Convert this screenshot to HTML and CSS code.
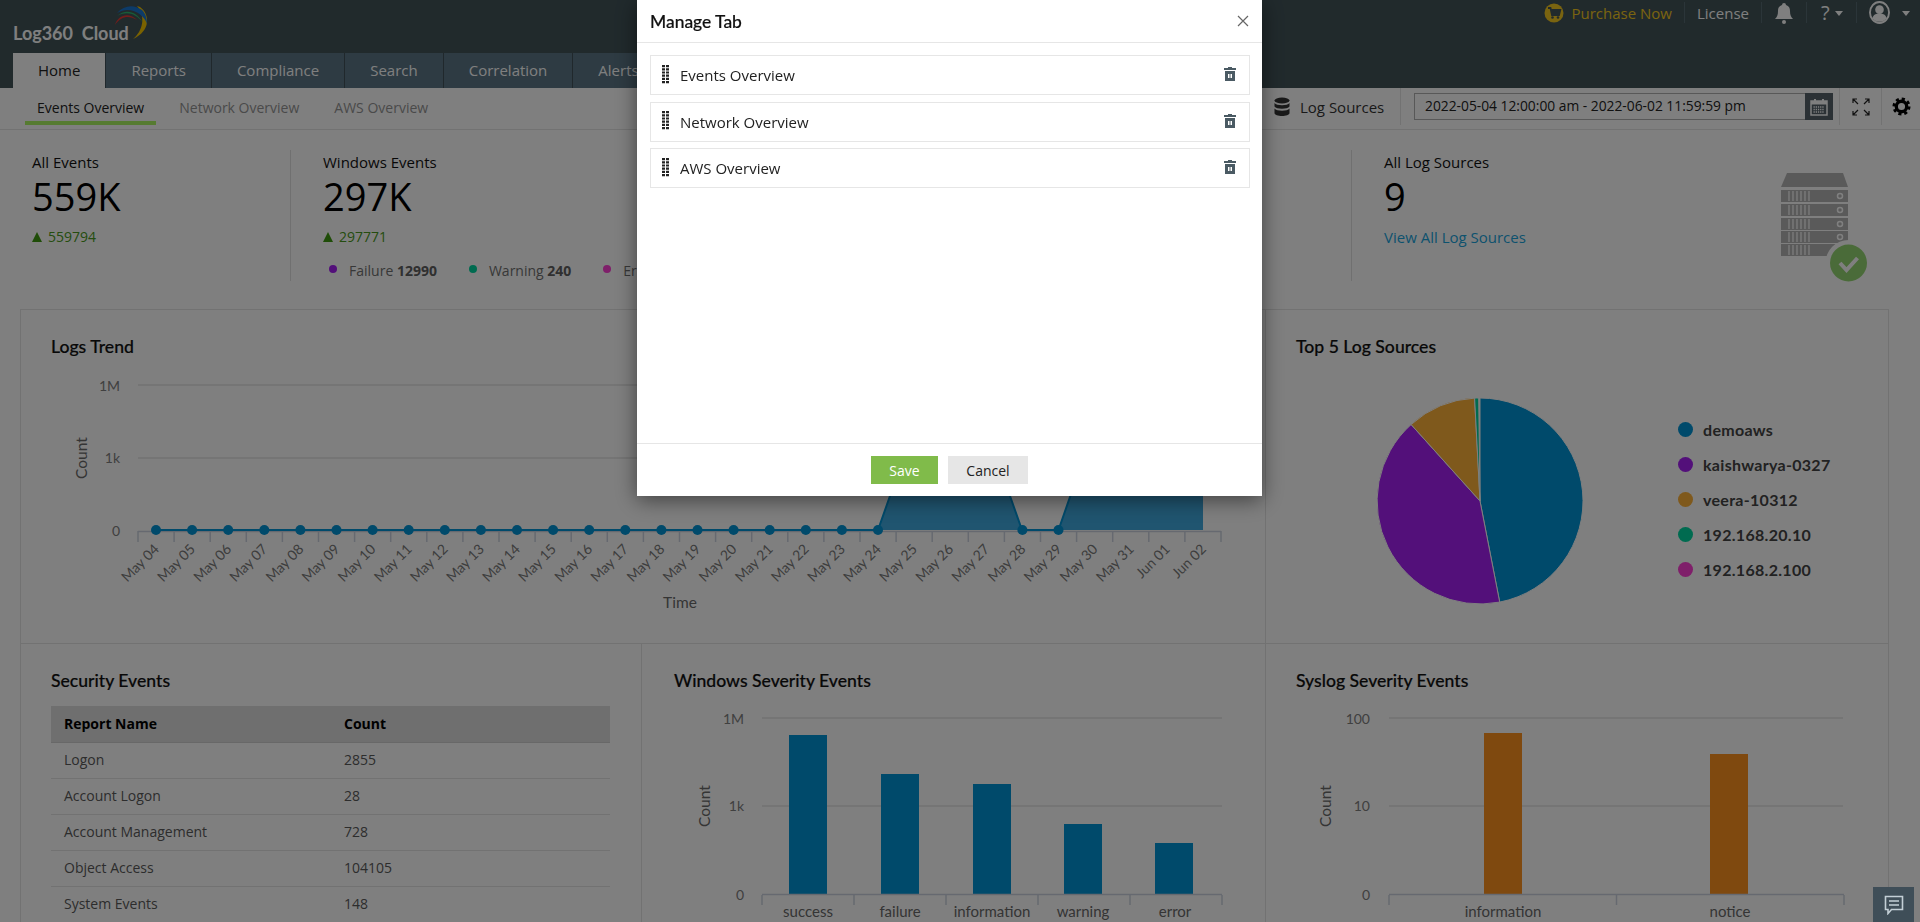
FILE: index.html
```html
<!DOCTYPE html>
<html lang="en">
<head>
  <meta charset="UTF-8">
  <meta name="viewport" content="width=device-width, initial-scale=1.0">
  <title>Log360 Cloud</title>
  <link rel="stylesheet" href="styles.css">
</head>
<body>
  <header class="header">
    <div class="top_bar">
      <div class="logo">
        <span class="logo_text">Log360&nbsp; Cloud</span>
        <svg class="logo_arcs" viewBox="110 0 45 45">
          <path d="M140 7C150 14 151 31 133 39C143 31 146 16 137 6Z" fill="#f4c400"/>
          <path d="M117 13C124 5 134 4 142 10C146 14 147 19 147 24C144 14 130 5 117 13Z" fill="#1976d2"/>
          <path d="M117 16C125 9 136 10 143 23C136 13 126 11 117 16Z" fill="#2eb872"/>
          <path d="M115 25C118 14 130 12 137 20C129 15 121 16 115 25Z" fill="#e53935"/>
        </svg>
      </div>
      <div class="utils">
        <a class="util purchase">
          <svg class="cart" viewBox="0 0 20 20">
            <circle cx="10" cy="10" r="9.5" fill="#f4c820"/>
            <path d="M4 5h2.5l1.5 7h7l1.300-5H7" fill="none" stroke="#425459" stroke-width="1.800"/>
            <rect x="7.500" y="7" width="8" height="4" fill="#425459"/>
            <circle cx="8.500" cy="14.500" r="1.300" fill="#425459"/>
            <circle cx="14" cy="14.500" r="1.300" fill="#425459"/>
          </svg>
          Purchase Now
        </a>
        <a class="util">License</a>
        <a class="util">
          <svg class="bell" viewBox="0 0 20 22">
            <path d="M10 1a2 2 0 0 1 2 2c3 1 4 3 4 6 0 4 1 6 3 8H1c2-2 3-4 3-8 0-3 1-5 4-6a2 2 0 0 1 2-2Z" fill="#fff"/>
            <circle cx="10" cy="20" r="2" fill="#fff"/>
          </svg>
        </a>
        <a class="util help">?<i class="caret"></i></a>
        <a class="util last">
          <svg class="user" viewBox="0 0 22 24">
            <ellipse cx="11" cy="12" rx="10" ry="11" fill="none" stroke="#fff" stroke-width="2"/>
            <circle cx="11" cy="9" r="4.500" fill="#fff"/>
            <path d="M3.500 18c1-4 4-5 7.500-5s6.500 1 7.500 5c-4 5-11 5-15 0Z" fill="#fff"/>
          </svg>
          <i class="caret"></i>
        </a>
      </div>
    </div>
    <nav class="tabs">
      <a class="tab active">Home</a>
      <a class="tab">Reports</a>
      <a class="tab">Compliance</a>
      <a class="tab">Search</a>
      <a class="tab">Correlation</a>
      <a class="tab">Alerts</a>
    </nav>
  </header>

  <div class="sub_nav">
    <div class="sub_tabs">
      <a class="sub_tab active">Events Overview</a>
      <a class="sub_tab">Network Overview</a>
      <a class="sub_tab">AWS Overview</a>
    </div>
    <div class="tools">
      <div class="tool log_src">
        <svg class="db" viewBox="0 0 16 20">
          <ellipse cx="8" cy="3.500" rx="7.500" ry="3" fill="#333"/>
          <path d="M.5 6c2 3 13 3 15 0v3.500c-2 3-13 3-15 0ZM.5 11.500c2 3 13 3 15 0V16c0 4-15 4-15 0Z" fill="#333"/>
        </svg>
        <span>Log Sources</span>
      </div>
      <div class="tool date_tool">
        <div class="date_inp">2022-05-04 12:00:00 am - 2022-06-02 11:59:59 pm</div>
        <div class="cal_btn">
          <svg class="cal" viewBox="0 0 18 18">
            <rect x="1" y="3" width="16" height="14" fill="none" stroke="#fff" stroke-width="1.500"/>
            <rect x="1" y="3" width="16" height="3.500" fill="#fff"/>
            <path d="M5 1v4M13 1v4" stroke="#fff" stroke-width="2"/>
            <path d="M3.500 9h11M3.500 11.500h11M3.500 14h11" stroke="#fff" stroke-width="1.300" stroke-dasharray="1.300 .9"/>
          </svg>
        </div>
      </div>
      <div class="tool expand">
        <svg class="expand_ico" viewBox="0 0 20 20">
          <path d="M2 6V2h4M2 2l5 5M14 2h4v4M18 2l-5 5M2 14v4h4M2 18l5-5M18 14v4h-4M18 18l-5-5" fill="none" stroke="#222" stroke-width="1.200"/>
        </svg>
      </div>
      <div class="tool gear">
        <svg class="gear_ico" viewBox="0 0 20 20">
          <circle cx="10" cy="10" r="5.500" fill="none" stroke="#000" stroke-width="3.500"/>
          <circle cx="10" cy="10" r="8" fill="none" stroke="#000" stroke-width="3" stroke-dasharray="3.280 3"/>
        </svg>
      </div>
    </div>
  </div>

  <section class="stats">
    <div class="stat first">
      <div class="stat_label">All Events</div>
      <div class="stat_num">559K</div>
      <div class="stat_delta"><i class="up"></i>559794</div>
    </div>
    <div class="stat wide">
      <div class="stat_label">Windows Events</div>
      <div class="stat_num">297K</div>
      <div class="stat_delta"><i class="up"></i>297771</div>
      <div class="stat_legend">
        <span><i class="dot purple"></i>Failure <b>12990</b></span>
        <span><i class="dot green"></i>Warning <b>240</b></span>
        <span><i class="dot pink"></i>Error <b>112</b></span>
      </div>
    </div>
    <div class="stat last_stat">
      <div>
        <div class="stat_label">All Log Sources</div>
        <div class="stat_num">9</div>
        <a class="stat_link">View All Log Sources</a>
      </div>
      <svg class="server" viewBox="1775 170 95 112">
        <polygon points="1787,172 1843,172 1848,186 1781,186" fill="#b5b5b5"/>
        <g fill="#b5b5b5">
          <rect x="1781" y="189" width="67" height="12"/>
          <rect x="1781" y="203" width="67" height="12"/>
          <rect x="1781" y="217" width="67" height="12"/>
          <rect x="1781" y="230" width="67" height="12"/>
          <rect x="1781" y="243" width="67" height="12"/>
        </g>
        <path d="M1789 190v10M1793 190v10M1797 190v10M1801 190v10M1805 190v10M1809 190v10M1789 204v10M1793 204v10M1797 204v10M1801 204v10M1805 204v10M1809 204v10M1789 218v10M1793 218v10M1797 218v10M1801 218v10M1805 218v10M1809 218v10M1789 231v10M1793 231v10M1797 231v10M1801 231v10M1805 231v10M1809 231v10M1789 244v10M1793 244v10M1797 244v10M1801 244v10M1805 244v10M1809 244v10" stroke="#fff" stroke-width="1.200"/>
        <g fill="#b5b5b5" stroke="#fff" stroke-width="1.500">
          <circle cx="1840" cy="195" r="2.500"/>
          <circle cx="1840" cy="209" r="2.500"/>
          <circle cx="1840" cy="223" r="2.500"/>
          <circle cx="1840" cy="236" r="2.500"/>
        </g>
        <circle cx="1848.500" cy="262" r="23" fill="#fff"/>
        <circle cx="1848.500" cy="262" r="18.500" fill="#95d673"/>
        <path d="M1840 262l6.500 7 11-12" fill="none" stroke="#fff" stroke-width="4"/>
      </svg>
    </div>
  </section>

  <section class="cards">
    <div class="card trend">
      <h3>Logs Trend</h3>
      <svg class="trend_chart" viewBox="51 360 1200 270">
        <path d="M138 385H1221M138 458H1221" stroke="#e4e4e4" stroke-width="1.500"/>
        <path d="M878 530L914 428L986 428L1022 530ZM1058.500 530L1094 428L1203 428L1203 530Z" fill="#40aae0"/>
        <path d="M138 531.500H1221M138 531V542M174.100 531V542M210.200 531V542M246.300 531V542M282.400 531V542M318.500 531V542M354.600 531V542M390.700 531V542M426.800 531V542M462.900 531V542M499 531V542M535.100 531V542M571.200 531V542M607.300 531V542M643.400 531V542M679.500 531V542M715.600 531V542M751.700 531V542M787.800 531V542M823.900 531V542M860 531V542M896.100 531V542M932.200 531V542M968.300 531V542M1004.400 531V542M1040.500 531V542M1076.600 531V542M1112.700 531V542M1148.800 531V542M1184.900 531V542M1221 531V542" stroke="#ccd3e0" stroke-width="1.500" fill="none"/>
        <path d="M156 530H878L914 428L986 428L1022 530H1058.500L1094 428" fill="none" stroke="#0094d6" stroke-width="2"/>
        <g fill="#0094d6">
          <circle cx="156" cy="530" r="5"/><circle cx="192.100" cy="530" r="5"/><circle cx="228.200" cy="530" r="5"/><circle cx="264.300" cy="530" r="5"/><circle cx="300.400" cy="530" r="5"/><circle cx="336.500" cy="530" r="5"/><circle cx="372.600" cy="530" r="5"/><circle cx="408.700" cy="530" r="5"/><circle cx="444.800" cy="530" r="5"/><circle cx="480.900" cy="530" r="5"/><circle cx="517" cy="530" r="5"/><circle cx="553.100" cy="530" r="5"/><circle cx="589.200" cy="530" r="5"/><circle cx="625.300" cy="530" r="5"/><circle cx="661.400" cy="530" r="5"/><circle cx="697.500" cy="530" r="5"/><circle cx="733.600" cy="530" r="5"/><circle cx="769.700" cy="530" r="5"/><circle cx="805.800" cy="530" r="5"/><circle cx="841.900" cy="530" r="5"/><circle cx="878" cy="530" r="5"/><circle cx="1022.400" cy="530" r="5"/><circle cx="1058.500" cy="530" r="5"/>
        </g>
        <g class="tick_y" text-anchor="end">
          <text x="120" y="391">1M</text>
          <text x="120" y="463">1k</text>
          <text x="120" y="536">0</text>
        </g>
        <text class="axis_t" transform="rotate(-90 87 458)" x="87" y="458" text-anchor="middle">Count</text>
        <text class="axis_t" x="680" y="608" text-anchor="middle">Time</text>
        <g class="tick_x" text-anchor="end">
          <text transform="rotate(-45 160 550)" x="160" y="550">May 04</text>
          <text transform="rotate(-45 196.100 550)" x="196.100" y="550">May 05</text>
          <text transform="rotate(-45 232.200 550)" x="232.200" y="550">May 06</text>
          <text transform="rotate(-45 268.300 550)" x="268.300" y="550">May 07</text>
          <text transform="rotate(-45 304.400 550)" x="304.400" y="550">May 08</text>
          <text transform="rotate(-45 340.500 550)" x="340.500" y="550">May 09</text>
          <text transform="rotate(-45 376.600 550)" x="376.600" y="550">May 10</text>
          <text transform="rotate(-45 412.700 550)" x="412.700" y="550">May 11</text>
          <text transform="rotate(-45 448.800 550)" x="448.800" y="550">May 12</text>
          <text transform="rotate(-45 484.900 550)" x="484.900" y="550">May 13</text>
          <text transform="rotate(-45 521 550)" x="521" y="550">May 14</text>
          <text transform="rotate(-45 557.100 550)" x="557.100" y="550">May 15</text>
          <text transform="rotate(-45 593.200 550)" x="593.200" y="550">May 16</text>
          <text transform="rotate(-45 629.300 550)" x="629.300" y="550">May 17</text>
          <text transform="rotate(-45 665.400 550)" x="665.400" y="550">May 18</text>
          <text transform="rotate(-45 701.500 550)" x="701.500" y="550">May 19</text>
          <text transform="rotate(-45 737.600 550)" x="737.600" y="550">May 20</text>
          <text transform="rotate(-45 773.700 550)" x="773.700" y="550">May 21</text>
          <text transform="rotate(-45 809.800 550)" x="809.800" y="550">May 22</text>
          <text transform="rotate(-45 845.900 550)" x="845.900" y="550">May 23</text>
          <text transform="rotate(-45 882 550)" x="882" y="550">May 24</text>
          <text transform="rotate(-45 918.100 550)" x="918.100" y="550">May 25</text>
          <text transform="rotate(-45 954.200 550)" x="954.200" y="550">May 26</text>
          <text transform="rotate(-45 990.300 550)" x="990.300" y="550">May 27</text>
          <text transform="rotate(-45 1026.400 550)" x="1026.400" y="550">May 28</text>
          <text transform="rotate(-45 1062.500 550)" x="1062.500" y="550">May 29</text>
          <text transform="rotate(-45 1098.600 550)" x="1098.600" y="550">May 30</text>
          <text transform="rotate(-45 1134.700 550)" x="1134.700" y="550">May 31</text>
          <text transform="rotate(-45 1170.800 550)" x="1170.800" y="550">Jun 01</text>
          <text transform="rotate(-45 1206.900 550)" x="1206.900" y="550">Jun 02</text>
        </g>
      </svg>
    </div>

    <div class="card">
      <h3>Top 5 Log Sources</h3>
      <div class="pie_wrap">
        <svg class="pie" viewBox="1370 390 220 220">
          <g stroke="#fff" stroke-width="1">
            <path d="M1480 501L1480 398A103 103 0 0 1 1499.700 602.100Z" fill="#0094d6"/>
            <path d="M1480 501L1499.700 602.100A103 103 0 0 1 1411.100 424.500Z" fill="#a620f4"/>
            <path d="M1480 501L1411.100 424.500A103 103 0 0 1 1474.600 398.100Z" fill="#ffb238"/>
            <path d="M1480 501L1474.600 398.100A103 103 0 0 1 1478.700 398Z" fill="#00d6a0"/>
          </g>
        </svg>
        <ul class="pie_legend">
          <li><i class="c_blue"></i>demoaws</li>
          <li><i class="c_purple"></i>kaishwarya-0327</li>
          <li><i class="c_brown"></i>veera-10312</li>
          <li><i class="c_green"></i>192.168.20.10</li>
          <li><i class="c_pink"></i>192.168.2.100</li>
        </ul>
      </div>
    </div>

    <div class="card">
      <h3>Security Events</h3>
      <table class="sec_table">
        <tr><th>Report Name</th><th>Count</th></tr>
        <tr><td>Logon</td><td>2855</td></tr>
        <tr><td>Account Logon</td><td>28</td></tr>
        <tr><td>Account Management</td><td>728</td></tr>
        <tr><td>Object Access</td><td>104105</td></tr>
        <tr><td>System Events</td><td>148</td></tr>
      </table>
    </div>

    <div class="card card_mid">
      <h3>Windows Severity Events</h3>
      <svg class="bar_chart" viewBox="674 700 590 222">
        <path d="M762 718H1222M762 806H1222" stroke="#e4e4e4" stroke-width="1.500"/>
        <g fill="#0094d6">
          <rect x="789" y="735" width="38" height="159"/>
          <rect x="881" y="774" width="38" height="120"/>
          <rect x="973" y="784" width="38" height="110"/>
          <rect x="1064" y="824" width="38" height="70"/>
          <rect x="1155" y="843" width="38" height="51"/>
        </g>
        <path d="M762 894.500H1222M762 895V905M854 895V905M946 895V905M1038 895V905M1130 895V905M1222 895V905" stroke="#ccd3e0" stroke-width="1.500" fill="none"/>
        <g class="tick_y" text-anchor="end">
          <text x="744" y="724">1M</text>
          <text x="744" y="811">1k</text>
          <text x="744" y="900">0</text>
        </g>
        <text class="axis_t" transform="rotate(-90 710 806)" x="710" y="806" text-anchor="middle">Count</text>
        <g class="tick_b" text-anchor="middle">
          <text x="808" y="917">success</text>
          <text x="900" y="917">failure</text>
          <text x="992" y="917">information</text>
          <text x="1083" y="917">warning</text>
          <text x="1175" y="917">error</text>
        </g>
      </svg>
    </div>

    <div class="card">
      <h3>Syslog Severity Events</h3>
      <svg class="bar_chart" viewBox="1296 700 590 222">
        <path d="M1389 718H1843M1389 806H1843" stroke="#e4e4e4" stroke-width="1.500"/>
        <g fill="#ff931e">
          <rect x="1484" y="733" width="38" height="161"/>
          <rect x="1710" y="754" width="38" height="140"/>
        </g>
        <path d="M1389 894.500H1844M1389 895V905M1616.500 895V905M1844 895V905" stroke="#ccd3e0" stroke-width="1.500" fill="none"/>
        <g class="tick_y" text-anchor="end">
          <text x="1370" y="724">100</text>
          <text x="1370" y="811">10</text>
          <text x="1370" y="900">0</text>
        </g>
        <text class="axis_t" transform="rotate(-90 1331 806)" x="1331" y="806" text-anchor="middle">Count</text>
        <g class="tick_b" text-anchor="middle">
          <text x="1503" y="917">information</text>
          <text x="1730" y="917">notice</text>
        </g>
      </svg>
    </div>
  </section>

  <div class="overlay"></div>

  <a class="chat_btn">
    <svg class="chat_ico" viewBox="0 0 20 20">
      <path d="M1.500 1.500h17v13h-11l-3.500 4v-4h-2.500Z" fill="none" stroke="#c3cfd6" stroke-width="1.600"/>
      <path d="M5 6h10M5 10h10" stroke="#c3cfd6" stroke-width="1.600"/>
    </svg>
  </a>

  <div class="modal">
    <div class="modal_head">
      <h2>Manage Tab</h2>
      <svg class="close" viewBox="0 0 12 12">
        <path d="M1 1l10 10M11 1L1 11" stroke="#666" stroke-width="1.200"/>
      </svg>
    </div>
    <div class="modal_body">
      <div class="tab_row">
        <svg class="drag" viewBox="0 0 7 19"><path d="M1.500 0v19M5.500 0v19" stroke="#222" stroke-width="3" stroke-dasharray="2.200 1"/></svg>
        <span>Events Overview</span>
        <svg class="trash" viewBox="0 0 12 14"><path d="M4 0h4v1h4v2H0V1h4ZM1 4h10v10H1ZM4 7v4h1.500V7ZM6.500 7v4H8V7Z" fill="#4a5a63" fill-rule="evenodd"/></svg>
      </div>
      <div class="tab_row">
        <svg class="drag" viewBox="0 0 7 19"><path d="M1.500 0v19M5.500 0v19" stroke="#222" stroke-width="3" stroke-dasharray="2.200 1"/></svg>
        <span>Network Overview</span>
        <svg class="trash" viewBox="0 0 12 14"><path d="M4 0h4v1h4v2H0V1h4ZM1 4h10v10H1ZM4 7v4h1.500V7ZM6.500 7v4H8V7Z" fill="#4a5a63" fill-rule="evenodd"/></svg>
      </div>
      <div class="tab_row">
        <svg class="drag" viewBox="0 0 7 19"><path d="M1.500 0v19M5.500 0v19" stroke="#222" stroke-width="3" stroke-dasharray="2.200 1"/></svg>
        <span>AWS Overview</span>
        <svg class="trash" viewBox="0 0 12 14"><path d="M4 0h4v1h4v2H0V1h4ZM1 4h10v10H1ZM4 7v4h1.500V7ZM6.500 7v4H8V7Z" fill="#4a5a63" fill-rule="evenodd"/></svg>
      </div>
    </div>
    <div class="modal_foot">
      <button class="btn btn_save">Save</button>
      <button class="btn btn_cancel">Cancel</button>
    </div>
  </div>
</body>
</html>
```

FILE: styles.css
```css
* {
  box-sizing: border-box;
}

html, body {
  margin: 0;
  height: 922px;
  overflow: hidden;
}

body {
  font-family: "Open Sans", sans-serif;
  font-size: 14px;
  color: #444;
  background-color: #fff;
}

/* header */
.header {
  height: 88px;
  background-color: #425459;
}

.top_bar {
  height: 53px;
  display: flex;
  justify-content: space-between;
}

.logo {
  position: relative;
  width: 160px;
  padding: 20px 0 0 13px;
}

.logo_text {
  font-family: Lato, sans-serif;
  font-weight: 700;
  font-size: 18px;
  line-height: 26px;
  color: #fff;
}

.logo_arcs {
  position: absolute;
  left: 110px;
  top: 0;
  width: 45px;
  height: 45px;
}

.utils {
  display: flex;
  align-items: flex-start;
  padding-top: 2px;
}

.util {
  display: flex;
  align-items: center;
  height: 21px;
  padding: 0 12px;
  font-size: 15px;
  color: #fff;
  border-right: 1px solid #566a72;
  white-space: nowrap;
}

.util.last {
  border-right: none;
  gap: 12px;
  padding-right: 10px;
}

.purchase {
  color: #f4c820;
  padding-left: 0;
  gap: 8px;
}

.cart {
  width: 20px;
  height: 20px;
}

.bell {
  width: 20px;
  height: 22px;
}

.help {
  font-size: 20px;
  width: 50px;
  padding-left: 14px;
  gap: 5px;
}

.user {
  width: 21px;
  height: 23px;
}

.caret {
  width: 0;
  height: 0;
  border: 4px solid transparent;
  border-top: 5px solid #fff;
  margin-top: 5px;
}

.tabs {
  height: 35px;
  display: flex;
  padding-left: 13px;
}

.tab {
  padding: 0 25px;
  font-size: 15px;
  line-height: 35px;
  color: #fff;
  background-color: #5c7686;
  border-right: 1px solid #415059;
}

.tab.active {
  color: #222;
  background-color: #fff;
  padding: 0 25px;
}

/* sub nav */
.sub_nav {
  height: 42px;
  display: flex;
  justify-content: space-between;
  border-bottom: 1px solid #e4e4e4;
}

.sub_tabs {
  display: flex;
  padding-left: 25px;
  gap: 11px;
}

.sub_tab {
  height: 37px;
  padding: 0 12px;
  line-height: 40px;
  color: #949494;
}

.sub_tab.active {
  color: #222;
  border-bottom: 4px solid #acf663;
}

.tools {
  display: flex;
  height: 37px;
}

.tool {
  display: flex;
  align-items: center;
  border-right: 1px solid #e4e4e4;
}

.log_src {
  width: 127px;
  gap: 10px;
  font-size: 15px;
  color: #333;
}

.db {
  width: 16px;
  height: 20px;
}

.date_tool {
  width: 439px;
  padding: 0 6px 0 13px;
}

.date_inp {
  width: 392px;
  height: 27px;
  padding-left: 10px;
  font-size: 13.8px;
  line-height: 24px;
  color: #222;
  border: 1px solid #b0b0b0;
  border-right: none;
}

.cal_btn {
  width: 28px;
  height: 27px;
  display: flex;
  align-items: center;
  justify-content: center;
  background-color: #56636b;
}

.cal {
  width: 18px;
  height: 18px;
}

.expand {
  width: 42px;
  justify-content: center;
}

.expand_ico {
  width: 20px;
  height: 20px;
}

.gear {
  width: 38px;
  border-right: none;
  padding-left: 10px;
}

.gear_ico {
  width: 19px;
  height: 19px;
}

/* stat strip */
.stats {
  height: 179px;
  padding: 20px 0 0 32px;
  display: flex;
  align-items: flex-start;
}

.stat {
  height: 131px;
  padding-top: 1px;
}

.first {
  width: 258px;
}

.wide {
  flex: 1;
  padding-left: 32px;
  border-left: 1px solid #e0e0e0;
}

.last_stat {
  width: 569px;
  padding-left: 32px;
  border-left: 1px solid #e0e0e0;
  display: flex;
  justify-content: space-between;
}

.stat_label {
  font-size: 15px;
  line-height: 22px;
  color: #111;
}

.stat_num {
  font-size: 38px;
  line-height: 46px;
  color: #000;
}

.stat_delta {
  margin-top: 8px;
  line-height: 20px;
  color: #4a9a20;
  display: flex;
  align-items: center;
  gap: 6px;
}

.up {
  width: 0;
  height: 0;
  border-left: 5.5px solid transparent;
  border-right: 5.5px solid transparent;
  border-bottom: 10px solid #3f9a10;
}

.stat_link {
  display: block;
  margin-top: 8px;
  font-size: 15px;
  line-height: 20px;
  color: #1aa4dc;
}

.stat_legend {
  margin-top: 14px;
  padding-left: 6px;
  display: flex;
  gap: 32px;
  line-height: 20px;
  color: #707070;
}

.stat_legend b {
  color: #606060;
}

.dot {
  display: inline-block;
  width: 8px;
  height: 8px;
  margin-right: 12px;
  border-radius: 50%;
  vertical-align: 3px;
}

.purple { background-color: #a620f4; }
.green { background-color: #00d6a0; }
.pink { background-color: #ff3ed4; }

.server {
  width: 95px;
  height: 112px;
  margin: 20px 50px 0 0;
}

/* cards */
.cards {
  width: 1869px;
  margin-left: 20px;
  display: grid;
  grid-template-columns: 621px 624px 623px;
  grid-template-rows: 334px 1fr;
  border-top: 1px solid #e4e4e4;
  border-left: 1px solid #e4e4e4;
}

.card {
  padding: 26px 0 0 30px;
  border-right: 1px solid #e4e4e4;
  border-bottom: 1px solid #e4e4e4;
  overflow: hidden;
}

.trend {
  grid-column: span 2;
}

.card_mid {
  padding-left: 32px;
}

.card h3 {
  margin: 0;
  font-family: Lato, sans-serif;
  font-size: 17.6px;
  font-weight: 500;
  line-height: 22px;
  color: #111;
  -webkit-text-stroke: .2px #111;
}

.trend_chart {
  display: block;
  width: 1200px;
  height: 270px;
  margin-top: 2px;
}

.bar_chart {
  display: block;
  width: 590px;
  height: 222px;
  margin-top: 8px;
}

svg text {
  font-family: Lato, sans-serif;
}

.tick_y text {
  font-size: 14px;
  fill: #808080;
}

.tick_x text {
  font-size: 14px;
  fill: #7a7a7a;
}

.tick_b text {
  font-size: 15px;
  fill: #6a6a6a;
}

.axis_t {
  font-size: 15.5px;
  fill: #6a6a6a;
}

.pie_wrap {
  display: flex;
  align-items: flex-start;
}

.pie {
  width: 220px;
  height: 220px;
  margin: 32px 0 0 74px;
}

.pie_legend {
  list-style: none;
  margin: 54px 0 0 88px;
  padding: 0;
  font-family: Lato, sans-serif;
  font-weight: 700;
  font-size: 16px;
  letter-spacing: .3px;
  color: #444;
}

.pie_legend li {
  height: 35px;
  display: flex;
  align-items: center;
  gap: 10px;
}

.pie_legend i {
  width: 15px;
  height: 15px;
  border-radius: 50%;
}

.c_blue { background-color: #0094d6; }
.c_purple { background-color: #a620f4; }
.c_brown { background-color: #ffb238; }
.c_green { background-color: #00d6a0; }
.c_pink { background-color: #ff3ed4; }

.sec_table {
  width: 559px;
  margin-top: 14px;
  border-collapse: collapse;
  font-size: 14px;
  color: #5a5a5a;
}

.sec_table th {
  text-align: left;
  height: 36px;
  padding: 0 0 0 13px;
  color: #000;
  background-color: #dedede;
  border-bottom: 1px solid #d0d0d0;
}

.sec_table th:first-child {
  width: 280px;
}

.sec_table td {
  height: 36px;
  padding: 0 0 2px 13px;
  border-bottom: 1px solid #e4e4e4;
}

/* manage tab dialog */
.overlay {
  position: fixed;
  inset: 0;
  background-color: rgba(0,0,0,.5);
}

.chat_btn {
  position: fixed;
  left: 1873px;
  top: 887px;
  width: 41px;
  height: 35px;
  display: flex;
  align-items: center;
  justify-content: center;
  background-color: #3f4e58;
}

.chat_ico {
  width: 20px;
  height: 20px;
}

.modal {
  position: fixed;
  left: 637px;
  top: 0;
  width: 625px;
  height: 496px;
  display: flex;
  flex-direction: column;
  background-color: #fff;
  box-shadow: 0 4px 20px rgba(0,0,0,.5);
}

.modal_head {
  height: 43px;
  padding: 0 13px;
  display: flex;
  align-items: center;
  justify-content: space-between;
  border-bottom: 1px solid #e6e6e6;
}

.modal_head h2 {
  margin: 0;
  font-family: Lato, sans-serif;
  font-size: 17.4px;
  font-weight: 500;
  color: #111;
  -webkit-text-stroke: .2px #111;
}

.close {
  width: 12px;
  height: 12px;
}

.modal_body {
  flex: 1;
  padding: 12px 12px 0 13px;
  display: flex;
  flex-direction: column;
  gap: 6.5px;
}

.tab_row {
  height: 40px;
  padding: 0 13px 0 11px;
  display: flex;
  align-items: center;
  font-size: 15px;
  color: #222;
  border: 1px solid #e6e6e6;
}

.tab_row span {
  flex: 1;
  margin-left: 11px;
}

.drag {
  width: 7px;
  height: 19px;
  margin-top: -2px;
}

.trash {
  width: 12px;
  height: 14px;
  margin-top: -2px;
}

.modal_foot {
  height: 53px;
  display: flex;
  justify-content: center;
  align-items: center;
  gap: 10px;
  border-top: 1px solid #e6e6e6;
}

.btn {
  height: 28px;
  border: none;
  outline: none;
  font-family: "Open Sans", sans-serif;
  font-size: 14px;
}

.btn_save {
  width: 67px;
  color: #fff;
  background-color: #80bb4a;
}

.btn_cancel {
  width: 80px;
  color: #222;
  background-color: #e6e6e6;
}
```
